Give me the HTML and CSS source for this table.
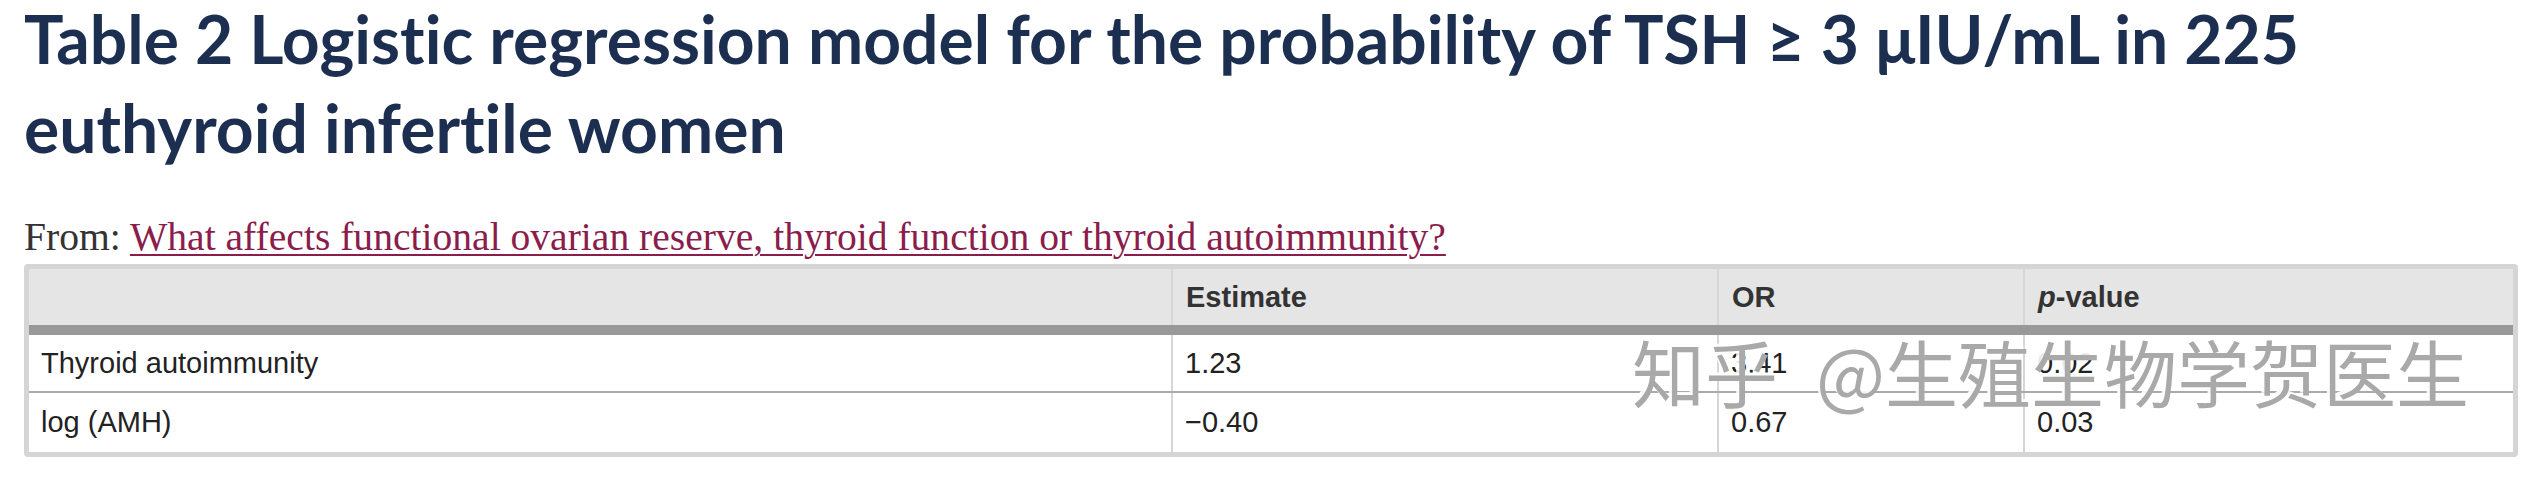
FILE: index.html
```html
<!DOCTYPE html>
<html lang="en">
<head>
<meta charset="utf-8">
<title>Table 2</title>
<link rel="stylesheet" href="styles.css">
</head>
<body>
<div class="page">
  <h1 class="title">Table 2 Logistic regression model for the probability of TSH ≥ 3 μIU/mL in 225 euthyroid infertile women</h1>
  <p class="from">From: <a class="src" href="#">What affects functional ovarian reserve, thyroid function or thyroid autoimmunity?</a></p>
  <div class="table-wrap">
    <table class="data">
      <colgroup>
        <col class="c1"><col class="c2"><col class="c3"><col class="c4">
      </colgroup>
      <thead>
        <tr><th></th><th>Estimate</th><th>OR</th><th><i>p</i>-value</th></tr>
      </thead>
      <tbody>
        <tr><td>Thyroid autoimmunity</td><td>1.23</td><td>3.41</td><td>0.02</td></tr>
        <tr><td>log (AMH)</td><td>−0.40</td><td>0.67</td><td>0.03</td></tr>
      </tbody>
    </table>
    <div class="watermark"><span class="wm-site">知乎</span>@生殖生物学贺医生</div>
  </div>
</div>
</body>
</html>
```
FILE: styles.css
```css
html, body { margin: 0; padding: 0; background: #fff; }
.page { padding: 0 11px 0 24px; }
.title {
  margin: -6px 0 0 0;
  font-family: "Lato", "Liberation Sans", sans-serif;
  font-weight: 700;
  font-size: 66px;
  line-height: 89px;
  color: #1c2f50;
  font-variant-ligatures: none;
  max-width: 2300px;
}
.from {
  margin: 45px 0 7px 0;
  font-family: "Liberation Serif", serif;
  font-size: 39.6px;
  line-height: 40px;
  color: #333;
}
.src { color: #8b1d4c; text-decoration: underline; text-decoration-thickness: 2px; text-underline-offset: 4px; }
.table-wrap {
  position: relative;
  border: 5px solid #d5d5d5;
  border-radius: 4px;
  width: 2484px;
}
.data {
  width: 2484px;
  border-collapse: collapse;
  table-layout: fixed;
  font-family: "Liberation Sans", "Helvetica", sans-serif;
  font-size: 29px;
  color: #222;
}
.c1 { width: 1143px; }
.c2 { width: 546px; }
.c3 { width: 306px; }
.c4 { width: 489px; }
.data th {
  background: #e5e5e5;
  height: 56px;
  padding: 0 13px;
  text-align: left;
  font-weight: 700;
  color: #333;
  border-left: 2px solid #d6d6d6;
  border-bottom: 10px solid #999;
}
.data td {
  height: 56px;
  padding: 0 13px 0 12px;
  border-left: 2px solid #d6d6d6;
  border-bottom: 2px solid #aaa;
}
.data tr > :first-child { border-left: none; }
.data tbody tr:last-child td { border-bottom: none; height: 59px; }
.watermark {
  position: absolute;
  left: 1603px;
  top: 61px;
  font-family: "Noto Sans CJK SC", sans-serif;
  font-size: 73px;
  font-weight: 400;
  line-height: 80px;
  color: #a9a9a9;
  white-space: nowrap;
  text-shadow: -3px -3px 0 rgba(255,255,255,0.9);
  pointer-events: none;
}
.wm-site { margin-right: 38px; }
```
